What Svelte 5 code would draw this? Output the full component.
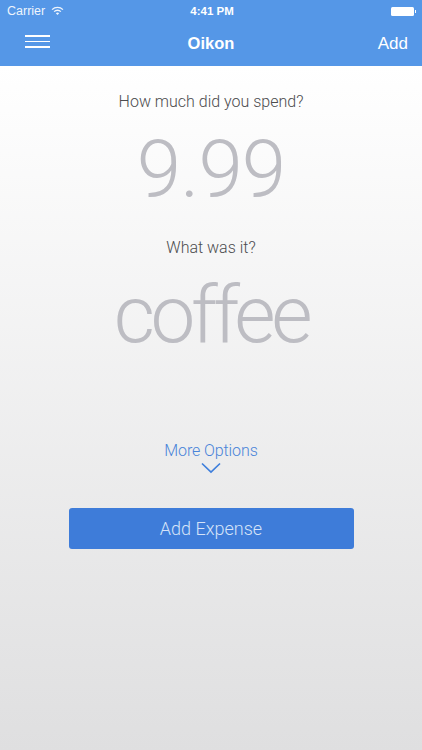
<script>
  const amount = '9.99'
  const item = 'coffee'
</script>

<div class="screen">
  <header>
    <div class="status">
      <div class="status-left">
        <span>Carrier</span>
        <svg width="13" height="10" viewBox="0 0 14 11">
          <path d="M1 4 A8.5 8.5 0 0 1 13 4" fill="none" stroke="#fff" stroke-width="1.5" />
          <path d="M3.3 6.2 A5.2 5.2 0 0 1 10.7 6.2" fill="none" stroke="#fff" stroke-width="1.5" />
          <path d="M5.2 8 L7 10 L8.8 8 A2.6 2.6 0 0 0 5.2 8 Z" fill="#fff" />
        </svg>
      </div>
      <span class="time">4:41 PM</span>
      <div class="battery">
        <i></i>
        <b></b>
      </div>
    </div>
    <nav>
      <div class="burger"><i></i><i></i><i></i></div>
      <span class="title">Oikon</span>
      <span class="add">Add</span>
    </nav>
  </header>

  <main>
    <p class="label first">How much did you spend?</p>
    <p class="value amount">{amount}</p>
    <p class="label second">What was it?</p>
    <p class="value item">{item}</p>
    <p class="more">More Options</p>
    <svg class="chevron" width="20" height="12" viewBox="0 0 20 12">
      <path d="M1 1.5 L10 10 L19 1.5" fill="none" stroke="#3f7fdc" stroke-width="1.7" />
    </svg>
    <button>Add Expense</button>
  </main>
</div>

<style>
  :global(body) {
    margin: 0;
  }

  .screen {
    width: 422px;
    height: 750px;
    display: flex;
    flex-direction: column;
    overflow: hidden;
    font-family: "Liberation Sans", Arial, sans-serif;
  }

  header {
    height: 66px;
    background: #5597e7;
    color: #fff;
    flex: none;
  }

  .status {
    height: 21px;
    display: grid;
    grid-template-columns: 1fr auto 1fr;
    align-items: center;
    padding: 1px 5px 0 7px;
    box-sizing: border-box;
    font-size: 12.5px;
  }

  .status-left {
    display: flex;
    align-items: center;
    gap: 6px;
    opacity: 0.9;
  }

  .time {
    font-weight: 700;
    font-size: 11.5px;
  }

  .battery {
    justify-self: end;
    display: flex;
    align-items: center;
    margin-right: 1px;
  }

  .battery i {
    display: block;
    width: 23px;
    height: 9px;
    background: #fff;
    border-radius: 1.5px;
  }

  .battery b {
    display: block;
    width: 1.5px;
    height: 3px;
    margin-left: 1px;
    background: #fff;
  }

  nav {
    height: 45px;
    display: grid;
    grid-template-columns: 1fr auto 1fr;
    align-items: center;
    padding: 0 14px;
  }

  .burger {
    display: flex;
    flex-direction: column;
    gap: 3.5px;
    margin: -4px 0 0 11px;
  }

  .burger i {
    display: block;
    width: 25px;
    height: 1.7px;
    background: #fff;
  }

  .title {
    font-size: 16.5px;
    font-weight: 700;
  }

  .add {
    justify-self: end;
    font-size: 17px;
  }

  main {
    flex: 1;
    display: flex;
    flex-direction: column;
    align-items: center;
    background: linear-gradient(#ffffff, #dfdfe0);
  }

  p {
    margin: 0;
  }

  .label {
    font-size: 16px;
    line-height: 20px;
    color: #4c4c4e;
    font-family: Roboto, "Liberation Sans", sans-serif;
    font-weight: 300;
  }

  .first {
    margin-top: 26px;
  }

  .second {
    margin-top: 28px;
  }

  .value {
    color: #bdbdc3;
    font-family: Roboto, "Liberation Sans", sans-serif;
    font-weight: 300;
    font-size: 80px;
    line-height: 1;
  }

  .amount {
    margin-top: 18px;
    letter-spacing: -1px;
  }

  .item {
    margin-top: 17px;
    letter-spacing: -4.4px;
  }

  .more {
    margin-top: 86px;
    font-size: 16px;
    line-height: 20px;
    letter-spacing: -0.1px;
    color: #4a84d9;
    font-family: Roboto, "Liberation Sans", sans-serif;
    font-weight: 300;
  }

  .chevron {
    margin-top: 1px;
  }

  button {
    margin-top: 34px;
    width: 285px;
    height: 41px;
    border: none;
    border-radius: 3px;
    background: #3e7cd9;
    color: #d5e3f8;
    font-family: Roboto, "Liberation Sans", sans-serif;
    font-weight: 300;
    font-size: 18px;
    padding: 0;
  }
</style>
